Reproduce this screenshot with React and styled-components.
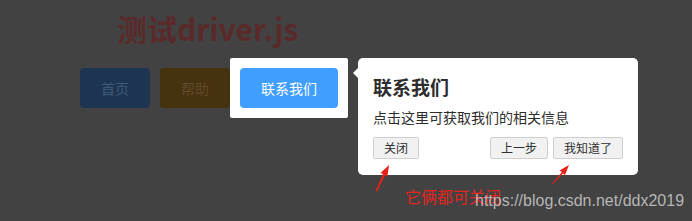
import React from "react";
import styled, { createGlobalStyle } from "styled-components";

const Global = createGlobalStyle`
  html, body { margin: 0; padding: 0; background: #424242; }
  body { font-family: "Noto Sans CJK SC", "Noto Sans", sans-serif; }
`;

const Page = styled.div`
  position: relative;
  width: 692px;
  height: 221px;
  overflow: hidden;
  padding-top: 10px;
  box-sizing: border-box;
`;

const Title = styled.h1`
  margin: 0 0 0 117px;
  font-size: 30px;
  line-height: 36px;
  font-weight: 700;
  color: #5a2a2b;
  letter-spacing: 0;
`;

const Row = styled.div`
  display: flex;
  align-items: flex-start;
  gap: 10px;
  margin: 22px 0 0 80px;
`;

const NavButton = styled.button`
  width: ${(p) => p.$w || 70}px;
  height: 40px;
  border: none;
  border-radius: 4px;
  background: ${(p) => p.$bg};
  color: ${(p) => p.$fg};
  font-family: "Noto Sans CJK SC", sans-serif;
  font-size: 14px;
  padding: 0;
  flex: none;
`;

const Highlight = styled.div`
  background: #ffffff;
  padding: 10px;
  margin: -10px 0 0 -10px;
  border-radius: 2px;
  display: flex;
  flex: none;
`;

const Popover = styled.div`
  position: relative;
  width: 280px;
  box-sizing: border-box;
  margin: -10px 0 0 0;
  padding: 15px 15px 16px 15px;
  background: #ffffff;
  border-radius: 5px;
  flex: none;
  color: #2d2d2d;
  &::before {
    content: "";
    position: absolute;
    left: -5px;
    top: 10px;
    border-style: solid;
    border-width: 5px 5px 5px 0;
    border-color: transparent #ffffff transparent transparent;
  }
`;

const PopTitle = styled.div`
  font-size: 19px;
  line-height: 28px;
  font-weight: 700;
  margin-bottom: 6px;
`;

const PopDesc = styled.div`
  font-size: 14px;
  line-height: 20px;
`;

const Footer = styled.div`
  display: flex;
  align-items: center;
  gap: 5px;
  margin-top: 10px;
`;

const Spacer = styled.div`
  flex: 1;
`;

const PopButton = styled.button`
  height: 22px;
  box-sizing: border-box;
  padding: 0 10px;
  border: 1px solid #cfcfcf;
  border-radius: 2px;
  background: #f1f1f1;
  color: #2d2d2d;
  font-family: "Noto Sans CJK SC", sans-serif;
  font-size: 12px;
  line-height: 20px;
`;

const Annotation = styled.svg`
  position: absolute;
  left: 0;
  top: 0;
  pointer-events: none;
`;

const Note = styled.div`
  position: absolute;
  left: 405px;
  top: 186px;
  font-size: 16px;
  line-height: 20px;
  color: #e2261e;
  font-family: "Noto Sans CJK SC", sans-serif;
`;

const Watermark = styled.div`
  position: absolute;
  left: 475px;
  top: 191px;
  font-family: "Liberation Sans", Arial, sans-serif;
  font-size: 16px;
  line-height: 20px;
  color: rgba(205, 205, 205, 0.85);
  white-space: nowrap;
`;

export default function App() {
  return (
    <>
      <Global />
      <Page>
        <Title>测试driver.js</Title>
        <Row>
          <NavButton $bg="#1d3553" $fg="#405a7a">首页</NavButton>
          <NavButton $bg="#46320f" $fg="#604a2e">帮助</NavButton>
          <Highlight>
            <NavButton $w={98} $bg="#409eff" $fg="#ffffff">联系我们</NavButton>
          </Highlight>
          <Popover>
            <PopTitle>联系我们</PopTitle>
            <PopDesc>点击这里可获取我们的相关信息</PopDesc>
            <Footer>
              <PopButton>关闭</PopButton>
              <Spacer />
              <PopButton>上一步</PopButton>
              <PopButton>我知道了</PopButton>
            </Footer>
          </Popover>
        </Row>
        <Annotation width="692" height="221" viewBox="0 0 692 221">
          <polygon points="375.5,191 383,174 380.5,173 389,165 387.5,176 385,175.5 377,191.5" fill="#e8201a" />
          <polygon points="552,183.5 562,172 559.5,170.5 569,165 565,175 563,173.5 553,184" fill="#e8201a" />
        </Annotation>
        <Note>它俩都可关闭</Note>
        <Watermark>https://blog.csdn.net/ddx2019</Watermark>
      </Page>
    </>
  );
}
